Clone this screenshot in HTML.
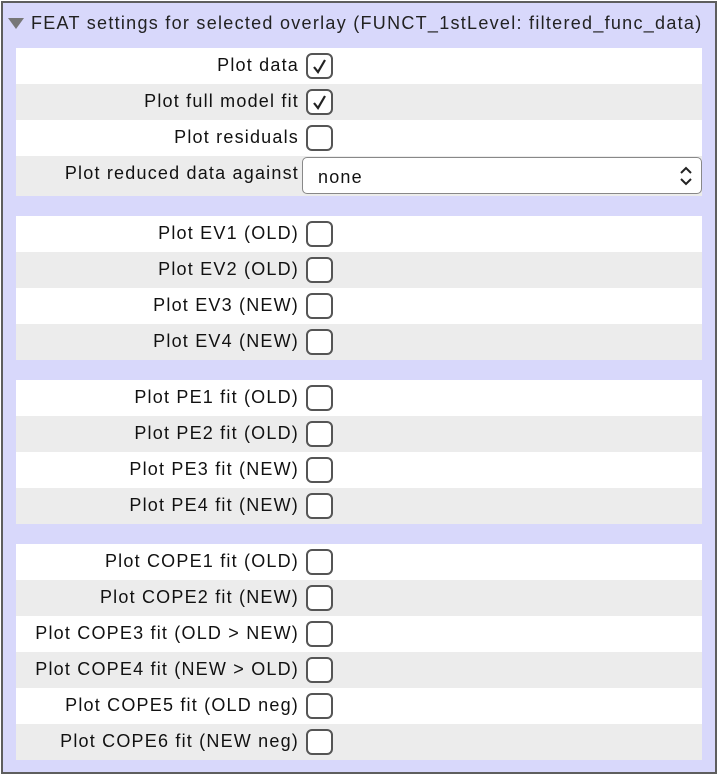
<!DOCTYPE html>
<html><head><style>
*{box-sizing:border-box;margin:0;padding:0}
body{width:718px;height:776px;background:#fff;font-family:"Liberation Sans",sans-serif;position:relative;overflow:hidden}
#box{position:absolute;left:1px;top:1px;width:716px;height:773px;border:2px solid #5e5e5e;background:#d8d8fb}
.t{position:absolute;left:28px;top:10px;font-size:18px;color:#222;white-space:nowrap;letter-spacing:1.28px}
.tri{position:absolute;left:5px;top:15px;width:0;height:0;border-left:8px solid transparent;border-right:8px solid transparent;border-top:11px solid #777}
.row{position:absolute;left:16px;width:686px;height:36px}
.row.g{background:#ececec}.row.w{background:#fff}
.lab{position:absolute;right:403px;top:7px;font-size:18px;color:#111;white-space:nowrap;letter-spacing:1.2px}
.cb{position:absolute;left:290px;top:5px;width:27px;height:26px;border:2px solid #555;border-radius:6px;background:#fff}
.cb svg{position:absolute;left:2px;top:2px}
.sel{position:absolute;left:286px;top:1px;width:400px;height:37px;border:1.5px solid #888;border-radius:5px;background:#fff}
.sel span{position:absolute;left:15px;top:9px;font-size:18px;color:#111;letter-spacing:1.2px}
</style></head><body>
<div id="box">
<div class="tri"></div>
<div class="t">FEAT settings for selected overlay (FUNCT_1stLevel: filtered_func_data)</div>
</div>
<div class="row w" style="top:48px"><div class="lab">Plot data</div><div class="cb"><svg width="20" height="20"><path d="M4 10 L8 15 L15 3" stroke="#222" stroke-width="2.2" fill="none"/></svg></div></div>
<div class="row g" style="top:84px"><div class="lab">Plot full model fit</div><div class="cb"><svg width="20" height="20"><path d="M4 10 L8 15 L15 3" stroke="#222" stroke-width="2.2" fill="none"/></svg></div></div>
<div class="row w" style="top:120px"><div class="lab">Plot residuals</div><div class="cb"></div></div>
<div class="row g" style="top:156px;height:40px"><div class="lab">Plot reduced data against</div><div class="sel"><span>none</span><svg style="position:absolute;right:8px;top:7px" width="14" height="22"><path d="M2 8 L7 3 L12 8 M2 14 L7 19 L12 14" stroke="#222" stroke-width="2" fill="none"/></svg></div></div>

<div class="row w" style="top:216px"><div class="lab">Plot EV1 (OLD)</div><div class="cb"></div></div>
<div class="row g" style="top:252px"><div class="lab">Plot EV2 (OLD)</div><div class="cb"></div></div>
<div class="row w" style="top:288px"><div class="lab">Plot EV3 (NEW)</div><div class="cb"></div></div>
<div class="row g" style="top:324px"><div class="lab">Plot EV4 (NEW)</div><div class="cb"></div></div>

<div class="row w" style="top:380px"><div class="lab">Plot PE1 fit (OLD)</div><div class="cb"></div></div>
<div class="row g" style="top:416px"><div class="lab">Plot PE2 fit (OLD)</div><div class="cb"></div></div>
<div class="row w" style="top:452px"><div class="lab">Plot PE3 fit (NEW)</div><div class="cb"></div></div>
<div class="row g" style="top:488px"><div class="lab">Plot PE4 fit (NEW)</div><div class="cb"></div></div>

<div class="row w" style="top:544px"><div class="lab">Plot COPE1 fit (OLD)</div><div class="cb"></div></div>
<div class="row g" style="top:580px"><div class="lab">Plot COPE2 fit (NEW)</div><div class="cb"></div></div>
<div class="row w" style="top:616px"><div class="lab">Plot COPE3 fit (OLD &gt; NEW)</div><div class="cb"></div></div>
<div class="row g" style="top:652px"><div class="lab">Plot COPE4 fit (NEW &gt; OLD)</div><div class="cb"></div></div>
<div class="row w" style="top:688px"><div class="lab">Plot COPE5 fit (OLD neg)</div><div class="cb"></div></div>
<div class="row g" style="top:724px"><div class="lab">Plot COPE6 fit (NEW neg)</div><div class="cb"></div></div>
</body></html>
